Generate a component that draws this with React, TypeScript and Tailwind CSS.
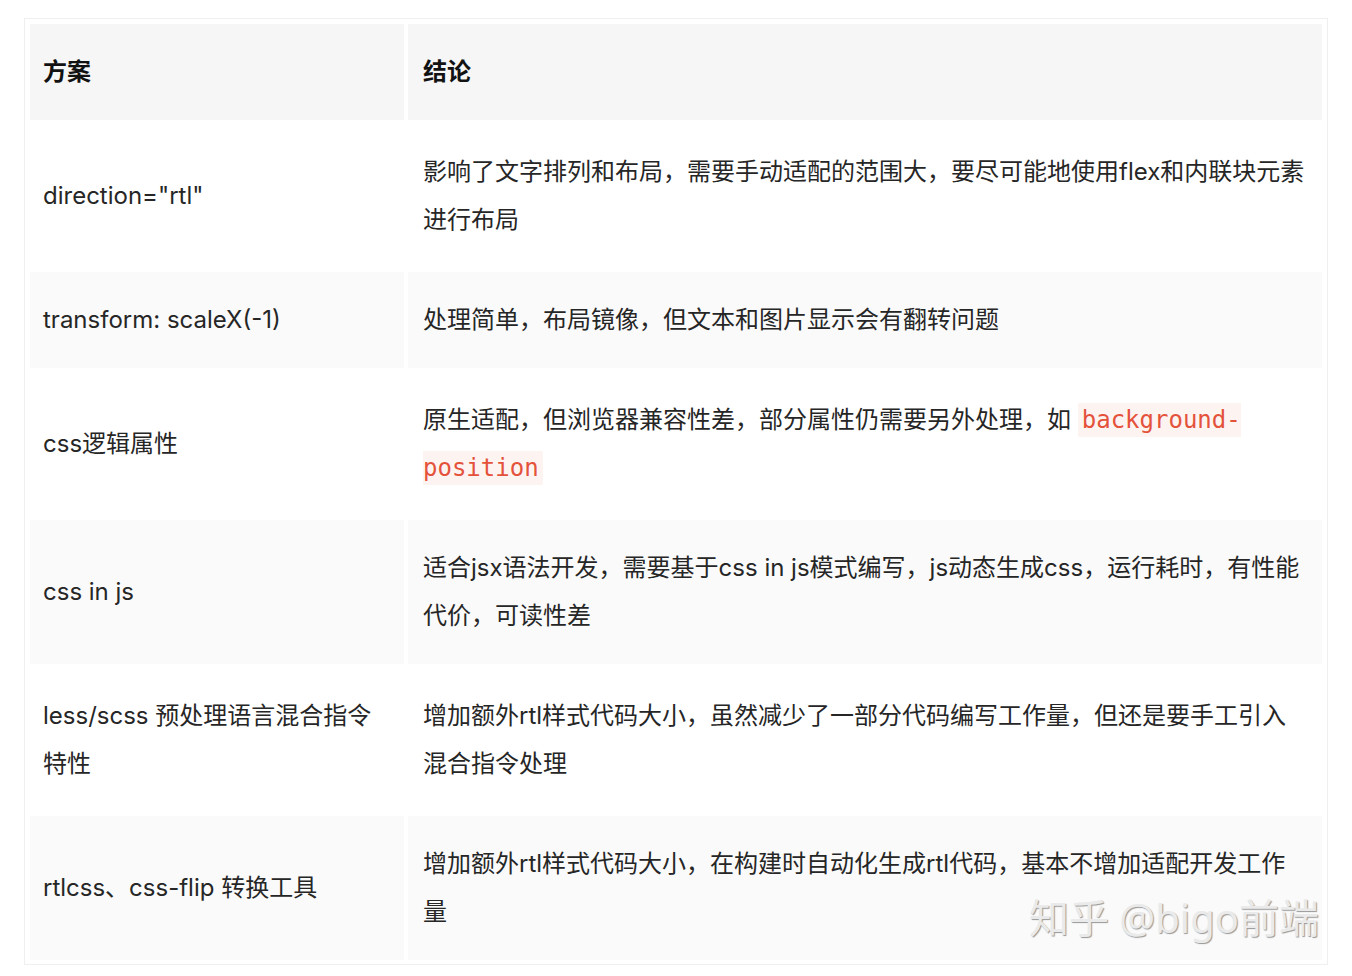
import React from "react";

const font = {
  fontFamily: 'Inter, "Noto Sans CJK SC", "Noto Sans", sans-serif',
};

function Code({ children }: { children: React.ReactNode }) {
  return (
    <code className="font-['DejaVu_Sans_Mono','Liberation_Mono',monospace] text-[24px] text-[#e4523b] bg-[#fdf4f2] px-[4px] py-[3px] rounded-[2px]">
      {children}
    </code>
  );
}

type Row = { a: React.ReactNode; b: React.ReactNode; bg: string };

const rows: Row[] = [
  {
    a: 'direction="rtl"',
    b: (
      <>
        影响了文字排列和布局，需要手动适配的范围大，要尽可能地使用flex和内联块元素
        <br />
        进行布局
      </>
    ),
    bg: "bg-white",
  },
  {
    a: "transform: scaleX(-1)",
    b: "处理简单，布局镜像，但文本和图片显示会有翻转问题",
    bg: "bg-[#fafafa]",
  },
  {
    a: "css逻辑属性",
    b: (
      <>
        原生适配，但浏览器兼容性差，部分属性仍需要另外处理，如{" "}
        <Code>
          background-
          <br />
          position
        </Code>
      </>
    ),
    bg: "bg-white",
  },
  {
    a: "css in js",
    b: (
      <>
        适合jsx语法开发，需要基于css in js模式编写，js动态生成css，运行耗时，有性能
        <br />
        代价，可读性差
      </>
    ),
    bg: "bg-[#fafafa]",
  },
  {
    a: (
      <>
        less/scss 预处理语言混合指令
        <br />
        特性
      </>
    ),
    b: (
      <>
        增加额外rtl样式代码大小，虽然减少了一部分代码编写工作量，但还是要手工引入
        <br />
        混合指令处理
      </>
    ),
    bg: "bg-white",
  },
  {
    a: "rtlcss、css-flip 转换工具",
    b: (
      <>
        增加额外rtl样式代码大小，在构建时自动化生成rtl代码，基本不增加适配开发工作
        <br />量
      </>
    ),
    bg: "bg-[#fafafa]",
  },
];

export default function App() {
  return (
    <div className="w-[1352px] h-[976px] bg-white overflow-hidden" style={font}>
      <div className="relative ml-[24px] mt-[18px] w-[1304px] border border-[#efefef] pt-[5px] pl-[5px] pr-[4px] pb-[4px]">
        <div className="grid grid-cols-[374px_914px] gap-[4px] text-[24px] leading-[48px] text-[#262626]">
          <div className="bg-[#f6f6f6] py-[24px] pl-[13px] pr-[13px] font-bold text-[#121212] flex items-center">
            方案
          </div>
          <div className="bg-[#f6f6f6] py-[24px] pl-[15px] pr-[12px] font-bold text-[#121212] flex items-center">
            结论
          </div>
          {rows.map((r, i) => (
            <React.Fragment key={i}>
              <div className={`${r.bg} py-[24px] pl-[13px] pr-[12px] flex items-center`}>
                <div>{r.a}</div>
              </div>
              <div className={`${r.bg} py-[24px] pl-[15px] pr-[8px] flex items-center`}>
                <div className="whitespace-nowrap">{r.b}</div>
              </div>
            </React.Fragment>
          ))}
        </div>
        <div className="absolute right-[8px] bottom-[22px] text-[40px] leading-[48px] font-normal text-[#eaeaea] [text-shadow:1px_1px_1px_rgba(0,0,0,0.4)] font-['Noto_Sans','Noto_Sans_CJK_SC',sans-serif] pointer-events-none">
          知乎 @bigo前端
        </div>
      </div>
    </div>
  );
}
